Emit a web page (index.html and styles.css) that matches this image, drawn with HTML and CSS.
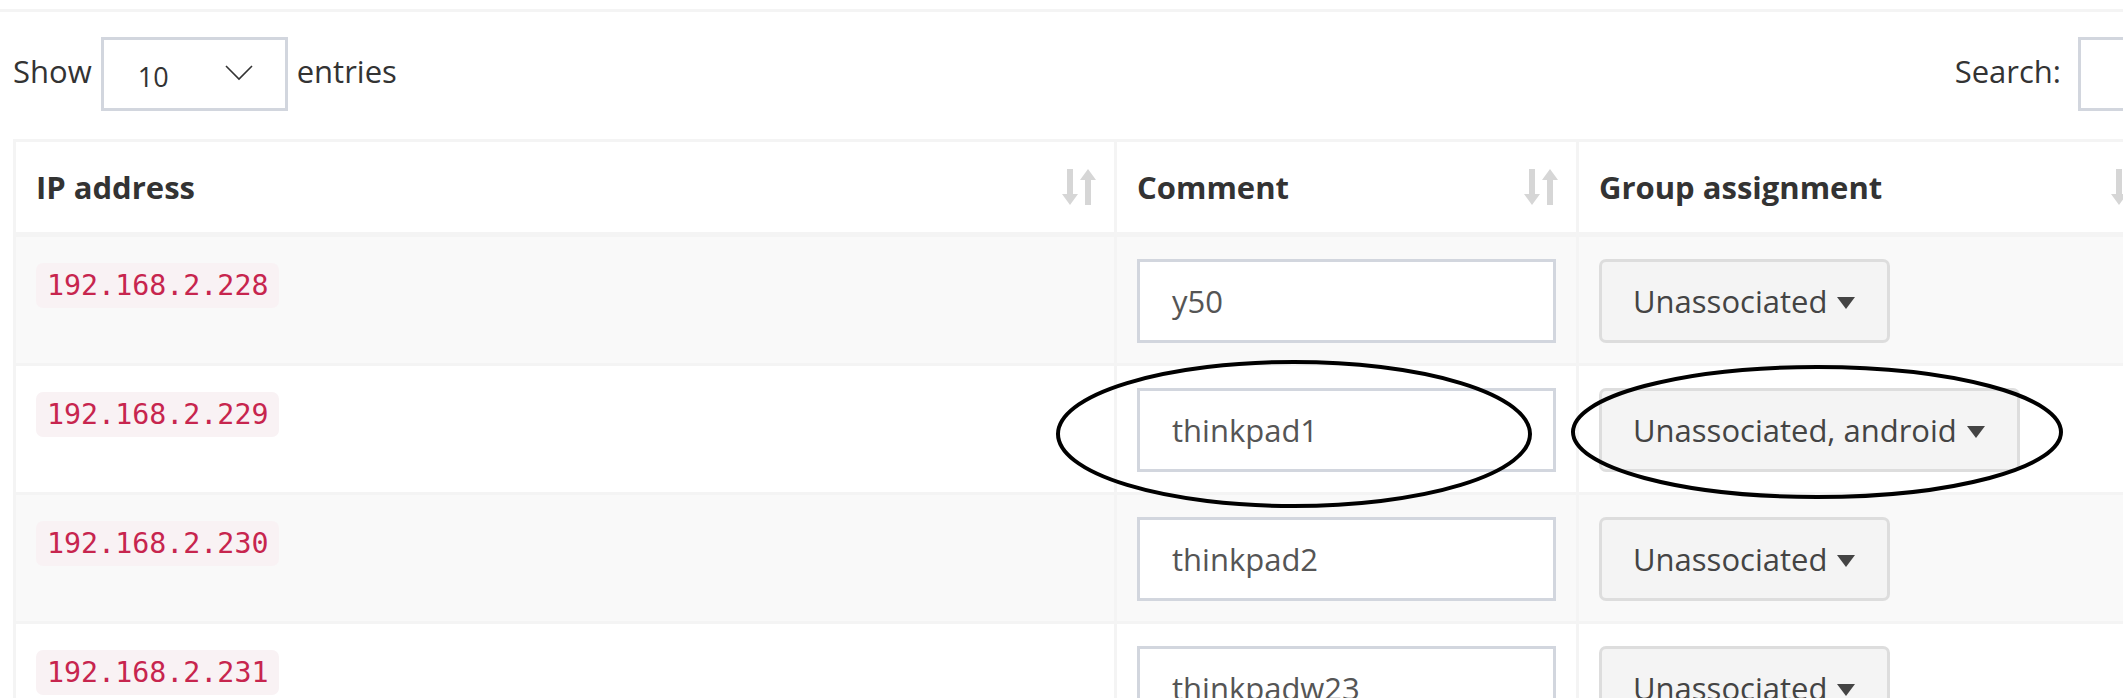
FILE: index.html
```html
<!DOCTYPE html>
<html lang="en">
<head>
    <meta charset="UTF-8">
    <meta name="viewport" content="width=device-width, initial-scale=1.0">
    <title>Clients</title>
    <link rel="stylesheet" href="styles.css">
</head>
<body>
    <div class="box-header"></div>

    <div class="box-body">
        <div class="toolbar">
            <label class="length">
                Show
                <span class="select">
                    <span>10</span>
                    <svg class="chevron" width="28" height="16" viewBox="0 0 28 16">
                        <path d="M1 1 L14 14 L27 1" fill="none" stroke="#333" stroke-width="1.6"/>
                    </svg>
                </span>
                entries
            </label>
            <label class="filter">
                Search:
                <span class="search"></span>
            </label>
        </div>

        <table class="clients">
            <colgroup>
                <col class="c-ip">
                <col class="c-comment">
                <col class="c-group">
            </colgroup>
            <thead>
                <tr>
                    <th><div class="th-inner">IP address <svg class="sort" width="34" height="36" viewBox="0 0 34 36"><path d="M5 0h6v25h5l-8 11-8-11h5z"/><path d="M23 36h6V11h5L26 0 18 11h5z"/></svg></div></th>
                    <th><div class="th-inner">Comment <svg class="sort" width="34" height="36" viewBox="0 0 34 36"><path d="M5 0h6v25h5l-8 11-8-11h5z"/><path d="M23 36h6V11h5L26 0 18 11h5z"/></svg></div></th>
                    <th><div class="th-inner">Group assignment <svg class="sort" width="34" height="36" viewBox="0 0 34 36"><path d="M5 0h6v25h5l-8 11-8-11h5z"/><path d="M23 36h6V11h5L26 0 18 11h5z"/></svg></div></th>
                </tr>
            </thead>
            <tbody>
                <tr>
                    <td class="ip"><code>192.168.2.228</code></td>
                    <td><div class="comment">y50</div></td>
                    <td><span class="btn-group">Unassociated <span class="caret"></span></span></td>
                </tr>
                <tr>
                    <td class="ip"><code>192.168.2.229</code></td>
                    <td><div class="comment">thinkpad1</div></td>
                    <td><span class="btn-group">Unassociated, android <span class="caret"></span></span></td>
                </tr>
                <tr>
                    <td class="ip"><code>192.168.2.230</code></td>
                    <td><div class="comment">thinkpad2</div></td>
                    <td><span class="btn-group">Unassociated <span class="caret"></span></span></td>
                </tr>
                <tr>
                    <td class="ip"><code>192.168.2.231</code></td>
                    <td><div class="comment">thinkpadw23</div></td>
                    <td><span class="btn-group">Unassociated <span class="caret"></span></span></td>
                </tr>
            </tbody>
        </table>
    </div>

    <!-- hand-drawn marks over the screenshot -->
    <svg class="marks" width="2123" height="698" viewBox="0 0 2123 698">
        <ellipse cx="1294" cy="434" rx="236" ry="72" fill="none" stroke="#000" stroke-width="4"/>
        <ellipse cx="1817" cy="432" rx="244" ry="65" fill="none" stroke="#000" stroke-width="4"/>
    </svg>
</body>
</html>
```

FILE: styles.css
```css
body {
    margin: 0;
    font-family: "Open Sans", "Noto Sans", sans-serif;
    font-size: 31px;
    color: #333;
    background-color: #fff;
    overflow: hidden;
}

.box-header {
    height: 9px;
    border-bottom: 3px solid #f4f4f4;
}

.box-body {
    width: 2445px;
    padding-left: 13px;
}

.toolbar {
    display: flex;
    justify-content: space-between;
    align-items: center;
    margin-top: 19px;
}

.length,
.filter {
    display: flex;
    align-items: center;
    gap: 9px;
}

.filter {
    gap: 17px;
}

.select {
    box-sizing: border-box;
    width: 187px;
    height: 74px;
    margin-top: 6px;
    border: 3px solid #d2d6de;
    display: flex;
    align-items: center;
    justify-content: space-between;
    padding: 4px 32px 0 34px;
    font-size: 27px;
    color: #333;
}

.chevron {
    margin-top: -6px;
}

.search {
    box-sizing: border-box;
    width: 380px;
    height: 74px;
    margin-top: 6px;
    border: 3px solid #d2d6de;
}

.clients {
    margin-top: 28px;
    table-layout: fixed;
    width: 2153px;
    border-collapse: collapse;
    border: 3px solid #f4f4f4;
}

.c-ip { width: 1101px; }
.c-comment { width: 462px; }
.c-group { width: 587px; }

.clients th {
    height: 90px;
    padding: 0 18px 0 20px;
    border: 3px solid #f4f4f4;
    border-bottom-width: 5px;
    text-align: left;
    font-weight: bold;
    font-size: 31px;
    vertical-align: middle;
}

.th-inner {
    display: flex;
    justify-content: space-between;
    align-items: center;
}

.sort path {
    fill: #d6d6d6;
}

.clients td {
    padding: 22px 20px 20px;
    border: 3px solid #f4f4f4;
    vertical-align: top;
}

.clients tbody tr:nth-child(odd) {
    background-color: #f9f9f9;
}

.ip code {
    display: block;
    width: fit-content;
    margin-top: 4px;
    padding: 5px 11px;
    line-height: 35px;
    font-family: "DejaVu Sans Mono", "Liberation Mono", monospace;
    font-size: 28.3px;
    color: #c7254e;
    background-color: #f9f2f4;
    border-radius: 7px;
}

.comment {
    box-sizing: border-box;
    width: 419px;
    height: 84px;
    border: 3px solid #d2d6de;
    background-color: #fff;
    padding-left: 32px;
    display: flex;
    align-items: center;
    color: #555;
}

.btn-group {
    box-sizing: border-box;
    display: inline-flex;
    align-items: center;
    height: 84px;
    padding: 0 32px 0 31px;
    border: 3px solid #ddd;
    border-radius: 7px;
    background-color: #f4f4f4;
    color: #444;
}

.caret {
    width: 0;
    height: 0;
    margin-left: 10px;
    margin-top: 4px;
    border-top: 12px solid #444;
    border-left: 9px solid transparent;
    border-right: 9px solid transparent;
}

.marks {
    position: absolute;
    top: 0;
    left: 0;
    pointer-events: none;
}
```
